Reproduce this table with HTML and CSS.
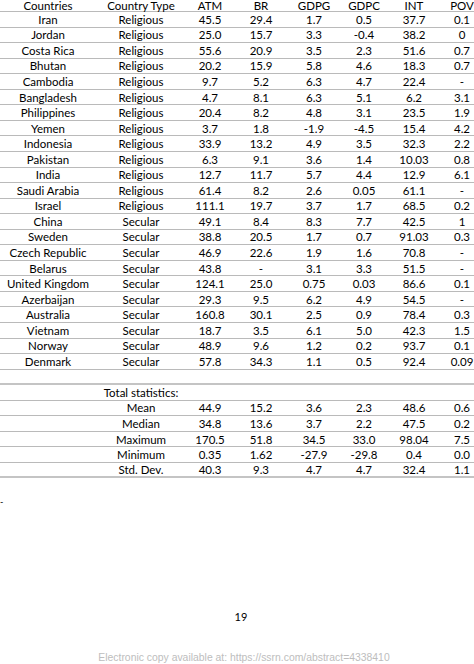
FILE: index.html
```html
<!DOCTYPE html>
<html>
<head>
<meta charset="utf-8">
<link rel="stylesheet" href="styles.css">
</head>
<body>
<div class="page">
  <div class="sheet">
    <div class="row head"><span>Countries</span><span>Country Type</span><span>ATM</span><span>BR</span><span>GDPG</span><span>GDPC</span><span>INT</span><span>POV</span></div>
    <div class="row"><span>Iran</span><span>Religious</span><span>45.5</span><span>29.4</span><span>1.7</span><span>0.5</span><span>37.7</span><span>0.1</span></div>
    <div class="row"><span>Jordan</span><span>Religious</span><span>25.0</span><span>15.7</span><span>3.3</span><span>-0.4</span><span>38.2</span><span>0</span></div>
    <div class="row"><span>Costa Rica</span><span>Religious</span><span>55.6</span><span>20.9</span><span>3.5</span><span>2.3</span><span>51.6</span><span>0.7</span></div>
    <div class="row"><span>Bhutan</span><span>Religious</span><span>20.2</span><span>15.9</span><span>5.8</span><span>4.6</span><span>18.3</span><span>0.7</span></div>
    <div class="row"><span>Cambodia</span><span>Religious</span><span>9.7</span><span>5.2</span><span>6.3</span><span>4.7</span><span>22.4</span><span>-</span></div>
    <div class="row"><span>Bangladesh</span><span>Religious</span><span>4.7</span><span>8.1</span><span>6.3</span><span>5.1</span><span>6.2</span><span>3.1</span></div>
    <div class="row"><span>Philippines</span><span>Religious</span><span>20.4</span><span>8.2</span><span>4.8</span><span>3.1</span><span>23.5</span><span>1.9</span></div>
    <div class="row"><span>Yemen</span><span>Religious</span><span>3.7</span><span>1.8</span><span>-1.9</span><span>-4.5</span><span>15.4</span><span>4.2</span></div>
    <div class="row"><span>Indonesia</span><span>Religious</span><span>33.9</span><span>13.2</span><span>4.9</span><span>3.5</span><span>32.3</span><span>2.2</span></div>
    <div class="row"><span>Pakistan</span><span>Religious</span><span>6.3</span><span>9.1</span><span>3.6</span><span>1.4</span><span>10.03</span><span>0.8</span></div>
    <div class="row"><span>India</span><span>Religious</span><span>12.7</span><span>11.7</span><span>5.7</span><span>4.4</span><span>12.9</span><span>6.1</span></div>
    <div class="row"><span>Saudi Arabia</span><span>Religious</span><span>61.4</span><span>8.2</span><span>2.6</span><span>0.05</span><span>61.1</span><span>-</span></div>
    <div class="row"><span>Israel</span><span>Religious</span><span>111.1</span><span>19.7</span><span>3.7</span><span>1.7</span><span>68.5</span><span>0.2</span></div>
    <div class="row"><span>China</span><span>Secular</span><span>49.1</span><span>8.4</span><span>8.3</span><span>7.7</span><span>42.5</span><span>1</span></div>
    <div class="row"><span>Sweden</span><span>Secular</span><span>38.8</span><span>20.5</span><span>1.7</span><span>0.7</span><span>91.03</span><span>0.3</span></div>
    <div class="row"><span>Czech Republic</span><span>Secular</span><span>46.9</span><span>22.6</span><span>1.9</span><span>1.6</span><span>70.8</span><span>-</span></div>
    <div class="row"><span>Belarus</span><span>Secular</span><span>43.8</span><span>-</span><span>3.1</span><span>3.3</span><span>51.5</span><span>-</span></div>
    <div class="row"><span>United Kingdom</span><span>Secular</span><span>124.1</span><span>25.0</span><span>0.75</span><span>0.03</span><span>86.6</span><span>0.1</span></div>
    <div class="row"><span>Azerbaijan</span><span>Secular</span><span>29.3</span><span>9.5</span><span>6.2</span><span>4.9</span><span>54.5</span><span>-</span></div>
    <div class="row"><span>Australia</span><span>Secular</span><span>160.8</span><span>30.1</span><span>2.5</span><span>0.9</span><span>78.4</span><span>0.3</span></div>
    <div class="row"><span>Vietnam</span><span>Secular</span><span>18.7</span><span>3.5</span><span>6.1</span><span>5.0</span><span>42.3</span><span>1.5</span></div>
    <div class="row"><span>Norway</span><span>Secular</span><span>48.9</span><span>9.6</span><span>1.2</span><span>0.2</span><span>93.7</span><span>0.1</span></div>
    <div class="row"><span>Denmark</span><span>Secular</span><span>57.8</span><span>34.3</span><span>1.1</span><span>0.5</span><span>92.4</span><span>0.09</span></div>
    <div class="row blank"></div>
    <div class="row"><span></span><span>Total statistics:</span></div>
    <div class="row"><span></span><span>Mean</span><span>44.9</span><span>15.2</span><span>3.6</span><span>2.3</span><span>48.6</span><span>0.6</span></div>
    <div class="row"><span></span><span>Median</span><span>34.8</span><span>13.6</span><span>3.7</span><span>2.2</span><span>47.5</span><span>0.2</span></div>
    <div class="row"><span></span><span>Maximum</span><span>170.5</span><span>51.8</span><span>34.5</span><span>33.0</span><span>98.04</span><span>7.5</span></div>
    <div class="row"><span></span><span>Minimum</span><span>0.35</span><span>1.62</span><span>-27.9</span><span>-29.8</span><span>0.4</span><span>0.0</span></div>
    <div class="row last"><span></span><span>Std. Dev.</span><span>40.3</span><span>9.3</span><span>4.7</span><span>4.7</span><span>32.4</span><span>1.1</span></div>
  </div>
  <div class="note">-</div>
  <div class="pagenum">19</div>
  <div class="footer">Electronic copy available at: https://ssrn.com/abstract=4338410</div>
</div>
</body>
</html>
```

FILE: styles.css
```css
html, body {
  margin: 0;
  padding: 0;
  background: #ffffff;
}
body {
  width: 474px;
  height: 664px;
  overflow: hidden;
}
.page {
  width: 474px;
  height: 664px;
  overflow: hidden;
  display: flex;
  flex-direction: column;
  font-family: Lato, "Liberation Sans", sans-serif;
  font-size: 11.5px;
  color: #000000;
}
.sheet {
  width: 484px;
}
.row {
  display: grid;
  grid-template-columns: 96px 90px 48px 54px 52px 48px 52px 44px;
  height: 15.55px;
  box-sizing: border-box;
  border-bottom: 1px solid #bababa;
  align-items: center;
  text-align: center;
  line-height: 13px;
  white-space: nowrap;
}
.row span {
  display: block;
}
.head {
  height: 12.05px;
  line-height: 11px;
}
.blank {
  border-bottom: 2px solid #c4c4c4;
}
.last {
  border-bottom: 2px solid #c4c4c4;
}
.note {
  margin-top: 17px;
  height: 14px;
  line-height: 14px;
  font-size: 9px;
}
.pagenum {
  margin-top: 101px;
  text-align: center;
  padding-left: 8px;
  line-height: 14px;
  font-size: 11px;
}
.footer {
  margin-top: 28px;
  text-align: center;
  padding-left: 14px;
  font-family: "Liberation Sans", Arial, sans-serif;
  font-size: 10.4px;
  line-height: 12px;
  color: #bdbdbd;
}
```
